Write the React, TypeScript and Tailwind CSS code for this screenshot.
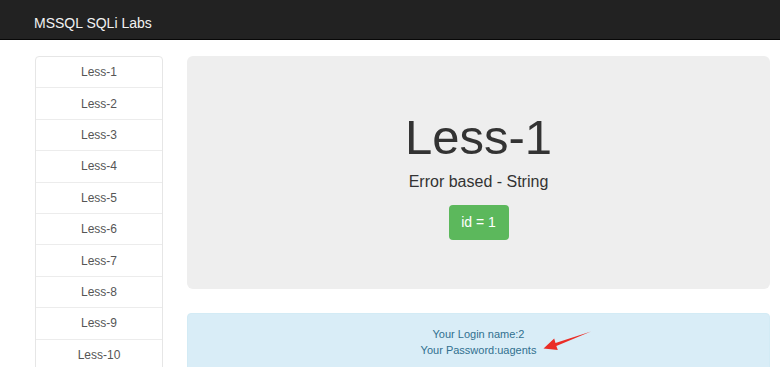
const lessons = ["Less-1", "Less-2", "Less-3", "Less-4", "Less-5", "Less-6", "Less-7", "Less-8", "Less-9", "Less-10"];

export default function App() {
  return (
    <div className="h-[367px] overflow-hidden bg-white font-['Liberation_Sans',Arial,sans-serif] text-[#333]">
      <nav className="h-10 bg-[#222] border-b border-[#080808] pl-[34px] pt-[11px]">
        <span className="text-[14px] leading-5 text-[#f2f2f2]">MSSQL SQLi Labs</span>
      </nav>

      <div className="flex gap-6 pl-[35px] pr-[10px] pt-4">
        {/* lesson list */}
        <div className="w-[128px] shrink-0 rounded-t border border-[#e6e6e6] bg-white">
          {lessons.map((l) => (
            <div key={l} className="h-[31.4px] flex items-center justify-center border-b border-[#ececec] text-[12px] text-[#555]">
              {l}
            </div>
          ))}
        </div>

        <div className="flex-1 flex flex-col gap-6">
          <div className="h-[233px] rounded-md bg-[#eee] pt-[57px] flex flex-col items-center">
            <h1 className="text-[49px] leading-[49px] text-[#333]">Less-1</h1>
            <p className="mt-[10px] text-[16px] leading-5 text-[#333]">Error based - String</p>
            <button className="mt-[13px] w-[60px] h-[35px] rounded bg-[#5cb85c] text-[14px] text-white">id = 1</button>
          </div>

          <div className="relative h-[70px] rounded border border-[#d3ebf5] bg-[#d9edf7] pt-[12px] text-center text-[11px] leading-4 text-[#31708f]">
            <div>Your Login name:2</div>
            <div>Your Password:uagents</div>
            <svg className="absolute left-0 top-0" width="420" height="50" viewBox="0 0 420 50">
              <polygon points="403,17.5 368.3,32 369.8,36 355.5,34.5 366.2,24.6 367.5,29" fill="#ea2d26" />
            </svg>
          </div>
        </div>
      </div>
    </div>
  );
}
